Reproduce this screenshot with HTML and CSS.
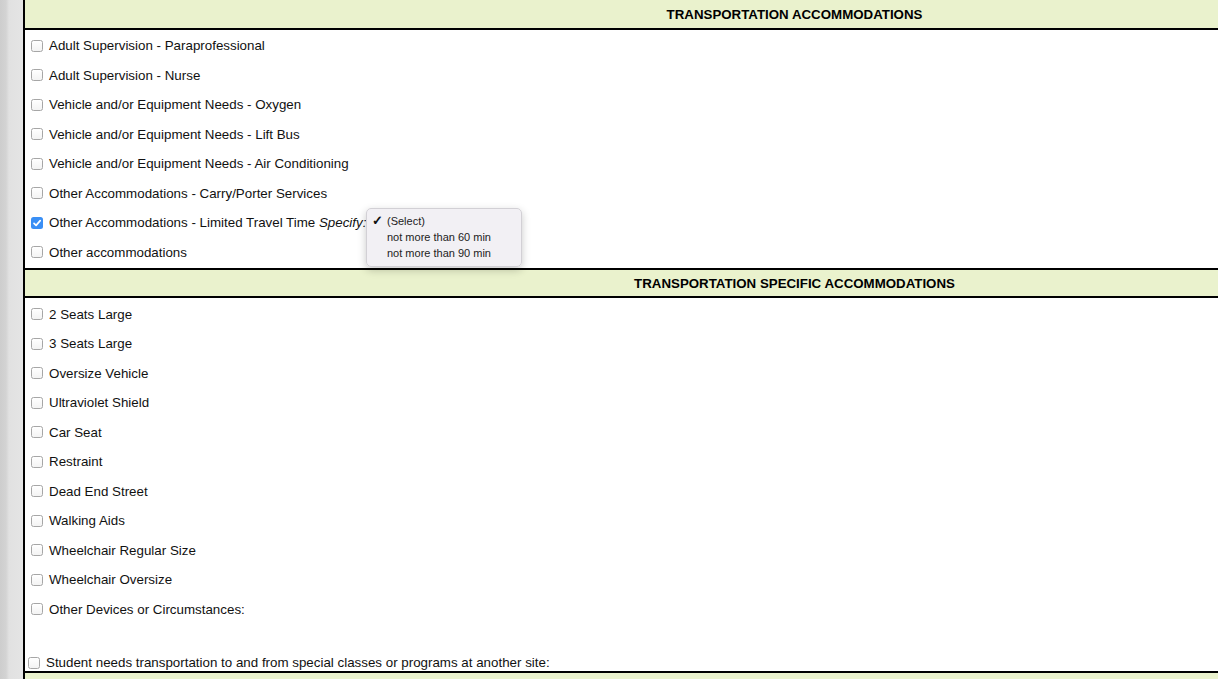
FILE: index.html
```html
<!DOCTYPE html>
<html>
<head>
<meta charset="utf-8">
<link rel="stylesheet" href="styles.css">
</head>
<body>
<div class="page">
  <div class="gutter"></div>
  <div class="sheet">
    <div class="head">TRANSPORTATION ACCOMMODATIONS</div>
    <div class="section s1">
      <div class="row"><span class="cb"></span><span>Adult Supervision - Paraprofessional</span></div>
      <div class="row"><span class="cb"></span><span>Adult Supervision - Nurse</span></div>
      <div class="row"><span class="cb"></span><span>Vehicle and/or Equipment Needs - Oxygen</span></div>
      <div class="row"><span class="cb"></span><span>Vehicle and/or Equipment Needs - Lift Bus</span></div>
      <div class="row"><span class="cb"></span><span>Vehicle and/or Equipment Needs - Air Conditioning</span></div>
      <div class="row"><span class="cb"></span><span>Other Accommodations - Carry/Porter Services</span></div>
      <div class="row with-menu"><span class="cb checked"><svg viewBox="0 0 12 12" width="12" height="12"><path d="M3 6.3 L5.1 8.4 L9.2 3.6" fill="none" stroke="#fff" stroke-width="1.7" stroke-linecap="round" stroke-linejoin="round"/></svg></span><span>Other Accommodations - Limited Travel Time <i>Specify:</i></span>
        <div class="menu">
          <div class="opt sel"><span class="tick">✓</span>(Select)</div>
          <div class="opt">not more than 60 min</div>
          <div class="opt">not more than 90 min</div>
        </div>
      </div>
      <div class="row"><span class="cb"></span><span>Other accommodations</span></div>
    </div>
    <div class="head top">TRANSPORTATION SPECIFIC ACCOMMODATIONS</div>
    <div class="section s2">
      <div class="row"><span class="cb"></span><span>2 Seats Large</span></div>
      <div class="row"><span class="cb"></span><span>3 Seats Large</span></div>
      <div class="row"><span class="cb"></span><span>Oversize Vehicle</span></div>
      <div class="row"><span class="cb"></span><span>Ultraviolet Shield</span></div>
      <div class="row"><span class="cb"></span><span>Car Seat</span></div>
      <div class="row"><span class="cb"></span><span>Restraint</span></div>
      <div class="row"><span class="cb"></span><span>Dead End Street</span></div>
      <div class="row"><span class="cb"></span><span>Walking Aids</span></div>
      <div class="row"><span class="cb"></span><span>Wheelchair Regular Size</span></div>
      <div class="row"><span class="cb"></span><span>Wheelchair Oversize</span></div>
      <div class="row"><span class="cb"></span><span>Other Devices or Circumstances:</span></div>
      <div class="row blank"></div>
      <div class="row student"><span class="cb"></span><span>Student needs transportation to and from special classes or programs at another site:</span></div>
    </div>
    <div class="head top foot"></div>
  </div>
</div>
</body>
</html>
```

FILE: styles.css
```css
html, body {
  margin: 0;
  padding: 0;
  overflow: hidden;
  background: #fff;
}
body {
  font-family: "Liberation Sans", Arial, Helvetica, sans-serif;
  font-size: 13.35px;
  color: #111;
}
.page {
  display: flex;
  width: 100%;
  height: 679px;
  overflow: hidden;
}
.gutter {
  width: 23px;
  flex: none;
  background: linear-gradient(to right, #cdcdcd 0, #d3d3d3 6px, #e1e1e1 9px, #e5e5e5 100%);
}
.sheet {
  width: 1539px;
  flex: none;
  border-left: 2px solid #000;
  display: flex;
  flex-direction: column;
}
.head {
  height: 28px;
  background: #eaf2cd;
  border-bottom: 2px solid #000;
  display: flex;
  align-items: center;
  justify-content: center;
  font-weight: bold;
  font-size: 13.3px;
  color: #000;
}
.head.top {
  border-top: 2px solid #000;
  height: 26px;
}
.head.foot {
  border-bottom: none;
  flex: 1;
}
.section {
  display: flex;
  flex-direction: column;
}
.s1 {
  padding-top: 1px;
  padding-bottom: 1px;
}
.s2 {
  padding-top: 1.5px;
}
.row {
  height: 29.5px;
  display: flex;
  align-items: center;
  padding-left: 6px;
  position: relative;
  white-space: nowrap;
}
.row.student {
  height: 17px;
  padding-left: 3px;
}
.blank {
  height: 30px;
}
.cb {
  width: 10px;
  height: 10px;
  border: 1px solid #a6a6a6;
  border-radius: 2.5px;
  background: linear-gradient(#ffffff, #f3f3f3);
  margin-right: 6px;
  flex: none;
  display: flex;
  align-items: center;
  justify-content: center;
}
.cb.checked {
  width: 12px;
  height: 12px;
  border: none;
  background: #3a8ff5;
}
.cb svg {
  display: block;
}
i {
  font-style: italic;
}
.menu {
  position: absolute;
  left: 341px;
  top: 0;
  width: 154px;
  padding: 4px 0 5px;
  background: rgba(242, 240, 244, 0.97);
  border: 1px solid #d2d0d5;
  border-radius: 5px;
  box-shadow: 0 3px 9px rgba(0, 0, 0, 0.22);
  font-size: 11px;
  color: #222;
  z-index: 5;
}
.opt {
  height: 16px;
  line-height: 16px;
  padding-left: 20px;
  position: relative;
}
.opt .tick {
  position: absolute;
  left: 5px;
  top: 0;
  font-size: 13px;
  font-weight: bold;
  color: #111;
}
```
